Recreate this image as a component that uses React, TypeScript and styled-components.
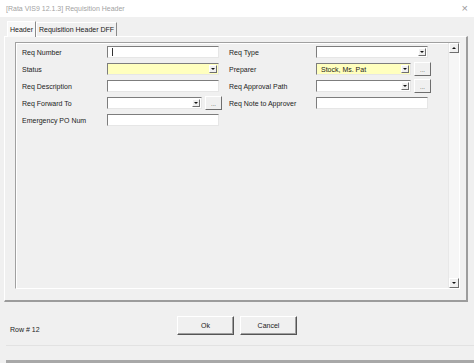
import { Fragment } from 'react';
import styled, { createGlobalStyle } from 'styled-components';

const GlobalStyle = createGlobalStyle`
  html, body {
    margin: 0;
    padding: 0;
    background: #f0f0f0;
  }
  * {
    box-sizing: border-box;
  }
`;

const Window = styled.div`
  width: 474px;
  height: 363px;
  display: flex;
  flex-direction: column;
  background: #f0f0f0;
  font-family: 'Liberation Sans', Arial, sans-serif;
  font-size: 7px;
  color: #1a1a1a;
  overflow: hidden;
`;

const TitleBar = styled.div`
  height: 17px;
  flex: none;
  display: flex;
  align-items: center;
  justify-content: space-between;
  padding: 0 6px 0 6px;
  background: #ffffff;
  color: #a3a3a3;
  font-size: 7px;
`;

const CloseGlyph = styled.span`
  font-size: 11px;
  color: #9a9a9a;
  line-height: 1;
`;

const TabArea = styled.div`
  flex: none;
  display: flex;
  flex-direction: column;
  padding: 3px 6px 0 4px;
`;

const TabStrip = styled.div`
  display: flex;
  height: 16px;
  padding-left: 3px;
  align-items: flex-end;
`;

const Tab = styled.div<{ $active?: boolean }>`
  height: ${(p) => (p.$active ? '16px' : '14px')};
  padding: 0 2px;
  display: flex;
  align-items: center;
  background: ${(p) => (p.$active ? '#f8f8f8' : '#f0f0f0')};
  border-left: 1px solid #ffffff;
  border-right: 1px solid #8a8a8a;
  border-top: 1px solid #ffffff;
  margin-bottom: ${(p) => (p.$active ? '-1px' : '0')};
  position: relative;
  z-index: ${(p) => (p.$active ? 1 : 0)};
  font-size: 7px;
`;

const TabPage = styled.div`
  height: 266px;
  display: flex;
  border-top: 1px solid #ffffff;
  border-left: 1px solid #ffffff;
  border-right: 2px solid #9c9c9c;
  border-bottom: 2px solid #9c9c9c;
  padding: 5px 6px 11px 10px;
`;

const ScrollFrame = styled.div`
  flex: 1;
  display: flex;
  border-top: 1px solid #a0a0a0;
  border-left: 1px solid #a0a0a0;
  border-right: 1px solid #ffffff;
  border-bottom: 1px solid #ffffff;
  box-shadow: inset 1px 1px 0 #ffffff;
`;

const FormGrid = styled.div`
  flex: 1;
  display: grid;
  grid-template-columns: 85px 112px 97px 112px;
  grid-auto-rows: 12px;
  row-gap: 5px;
  align-content: start;
  padding: 3px 0 0 6px;
`;

const Label = styled.div<{ $right?: boolean }>`
  display: flex;
  align-items: center;
  padding-left: ${(p) => (p.$right ? '10px' : '0')};
  white-space: nowrap;
  font-size: 7px;
  color: #222;
`;

const FieldCell = styled.div`
  display: flex;
  align-items: center;
  gap: 3px;
`;

const Box = styled.div<{ $yellow?: boolean; $width?: number }>`
  width: ${(p) => (p.$width ? `${p.$width}px` : '112px')};
  height: 12px;
  flex: none;
  display: flex;
  align-items: center;
  justify-content: space-between;
  background: ${(p) => (p.$yellow ? '#ffffbe' : '#ffffff')};
  border-top: 1px solid #7d7d7d;
  border-left: 1px solid #7d7d7d;
  border-right: 1px solid #e6e6e6;
  border-bottom: 1px solid #e6e6e6;
  padding: 0 1px 0 4px;
  font-size: 7px;
`;

const Caret = styled.span`
  width: 1px;
  height: 8px;
  background: #333;
`;

const DropButton = styled.div`
  width: 8px;
  height: 8px;
  flex: none;
  display: flex;
  align-items: center;
  justify-content: center;
  background: #f0f0f0;
  border-top: 1px solid #ffffff;
  border-left: 1px solid #ffffff;
  border-right: 1px solid #6e6e6e;
  border-bottom: 1px solid #6e6e6e;
`;

const Arrow = styled.span<{ $up?: boolean }>`
  width: 0;
  height: 0;
  border-left: 2px solid transparent;
  border-right: 2px solid transparent;
  ${(p) =>
    p.$up ? 'border-bottom: 2px solid #111;' : 'border-top: 2px solid #111;'}
`;

const EllipsisButton = styled.div`
  width: 17px;
  height: 14px;
  flex: none;
  display: flex;
  align-items: flex-end;
  justify-content: center;
  padding-bottom: 2px;
  background: #f0f0f0;
  border-top: 1px solid #ffffff;
  border-left: 1px solid #ffffff;
  border-right: 1px solid #6e6e6e;
  border-bottom: 1px solid #6e6e6e;
  font-size: 6px;
  line-height: 1;
  color: #333;
`;

const Scrollbar = styled.div`
  width: 11px;
  flex: none;
  display: flex;
  flex-direction: column;
  justify-content: space-between;
  background: #f6f6f6;
  border-left: 1px solid #e8e8e8;
`;

const ScrollButton = styled.div`
  height: 10px;
  display: flex;
  align-items: center;
  justify-content: center;
  background: #f0f0f0;
  border-top: 1px solid #ffffff;
  border-left: 1px solid #ffffff;
  border-right: 1px solid #6e6e6e;
  border-bottom: 1px solid #6e6e6e;
`;

const Footer = styled.div`
  flex: 1;
  display: flex;
  flex-direction: column;
`;

const ButtonRow = styled.div`
  height: 43px;
  display: flex;
  align-items: flex-start;
  padding: 14px 0 0 10px;
`;

const RowLabel = styled.div`
  width: 167px;
  margin-top: 10px;
  font-size: 7px;
  color: #222;
`;

const DialogButton = styled.div`
  width: 57px;
  height: 19px;
  margin-right: 6px;
  display: flex;
  align-items: center;
  justify-content: center;
  background: #f0f0f0;
  border-top: 1px solid #ffffff;
  border-left: 1px solid #ffffff;
  border-right: 1px solid #555555;
  border-bottom: 1px solid #555555;
  box-shadow: inset -1px -1px 0 #a0a0a0;
  font-size: 7px;
  color: #222;
`;

const StatusStrip = styled.div`
  flex: 1;
  border-top: 1px solid #e2e2e2;
  border-bottom: 3px solid #a8a8a8;
  margin-left: 6px;
`;

type Field =
  | { kind: 'text'; yellow?: boolean; caret?: boolean }
  | { kind: 'combo'; yellow?: boolean; value?: string; ellipsis?: boolean };

const renderField = (f: Field | null) => {
  if (!f) return <FieldCell />;
  if (f.kind === 'text') {
    return (
      <FieldCell>
        <Box $yellow={f.yellow}>{f.caret ? <Caret /> : null}</Box>
      </FieldCell>
    );
  }
  return (
    <FieldCell>
      <Box $yellow={f.yellow} $width={f.ellipsis ? 95 : 112}>
        <span>{f.value ?? ''}</span>
        <DropButton>
          <Arrow />
        </DropButton>
      </Box>
      {f.ellipsis ? <EllipsisButton>...</EllipsisButton> : null}
    </FieldCell>
  );
};

const rows: [string, Field, string, Field | null][] = [
  ['Req Number', { kind: 'text', caret: true }, 'Req Type', { kind: 'combo' }],
  [
    'Status',
    { kind: 'combo', yellow: true },
    'Preparer',
    { kind: 'combo', yellow: true, value: 'Stock, Ms. Pat', ellipsis: true },
  ],
  ['Req Description', { kind: 'text' }, 'Req Approval Path', { kind: 'combo', ellipsis: true }],
  ['Req Forward To', { kind: 'combo', ellipsis: true }, 'Req Note to Approver', { kind: 'text' }],
  ['Emergency PO Num', { kind: 'text' }, '', null],
];

export default function App() {
  return (
    <>
      <GlobalStyle />
      <Window>
        <TitleBar>
          <span>[Rata VIS9 12.1.3] Requisition Header</span>
          <CloseGlyph>×</CloseGlyph>
        </TitleBar>
        <TabArea>
          <TabStrip>
            <Tab $active>Header</Tab>
            <Tab>Requisition Header DFF</Tab>
          </TabStrip>
          <TabPage>
            <ScrollFrame>
              <FormGrid>
                {rows.map(([l1, f1, l2, f2]) => (
                  <Fragment key={l1}>
                    <Label>{l1}</Label>
                    {renderField(f1)}
                    <Label $right>{l2}</Label>
                    {renderField(f2)}
                  </Fragment>
                ))}
              </FormGrid>
              <Scrollbar>
                <ScrollButton>
                  <Arrow $up />
                </ScrollButton>
                <ScrollButton>
                  <Arrow />
                </ScrollButton>
              </Scrollbar>
            </ScrollFrame>
          </TabPage>
        </TabArea>
        <Footer>
          <ButtonRow>
            <RowLabel>Row # 12</RowLabel>
            <DialogButton>Ok</DialogButton>
            <DialogButton>Cancel</DialogButton>
          </ButtonRow>
          <StatusStrip />
        </Footer>
      </Window>
    </>
  );
}
